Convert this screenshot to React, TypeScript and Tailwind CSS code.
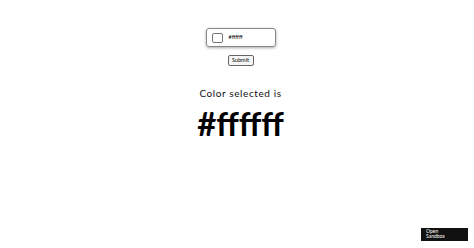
import React from "react";

export default function App() {
  return (
    <div className="relative w-[474px] h-[248px] bg-white overflow-hidden" style={{ fontFamily: "Lato, sans-serif" }}>
      <div className="flex flex-col items-center pl-[7px] pt-[28px]">
        <div className="flex items-center w-[70px] h-[19px] border border-[#888] rounded-[3px] shadow-[0_1px_3px_rgba(0,0,0,0.35)] pl-[5px] gap-[6px]">
          <div className="w-[11px] h-[10px] border border-[#777] rounded-[2px] bg-white" />
          <span className="text-[5.5px] text-black leading-none">#ffffff</span>
        </div>
        <button className="mt-[8px] w-[26px] h-[11px] border border-[#666] rounded-[2px] bg-[#f6f6f6] text-[5.5px] leading-none text-black flex items-center justify-center">
          Submit
        </button>
        <div className="mt-[22px] text-[10px] tracking-[0.6px] text-[#111] leading-none">Color selected is</div>
        <div className="mt-[9px] text-[33px] font-bold text-black leading-none">#ffffff</div>
      </div>
      <div className="absolute left-[421px] top-[228px] w-[47px] h-[13px] bg-[#111] text-white text-[5px] leading-[5px] px-[5px] pt-[1px]">
        Open
        <br />
        Sandbox
      </div>
    </div>
  );
}
